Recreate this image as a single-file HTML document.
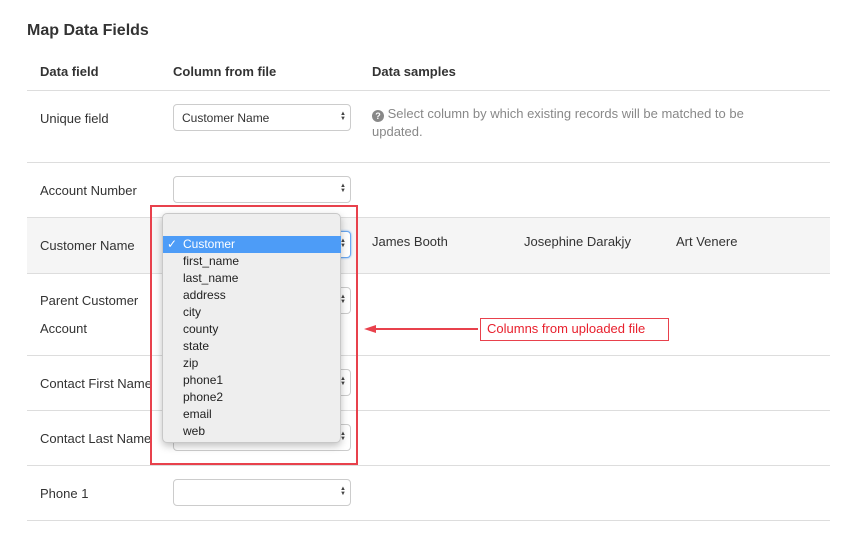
<!DOCTYPE html>
<html><head><meta charset="utf-8"><style>
body{margin:0;width:858px;height:533px;background:#fff;font-family:"Liberation Sans",sans-serif;color:#333;position:relative;overflow:hidden}
.a{position:absolute;white-space:nowrap}
.t{font-size:13px}
.h{font-weight:bold;font-size:13px;color:#333}
.line{position:absolute;left:27px;width:803px;height:1px;background:#ddd}
.sel{position:absolute;left:173px;width:178px;height:27px;border:1px solid #ccc;border-radius:4px;background:#fff;box-sizing:border-box}
.arr{position:absolute;right:4px;top:7px;font-size:6px;line-height:5px;color:#444}
</style></head><body>
<div class="a" style="left:27px;top:22px;font-size:16px;font-weight:bold;color:#333">Map Data Fields</div>
<div class="a h" style="left:40px;top:64px">Data field</div>
<div class="a h" style="left:173px;top:64px">Column from file</div>
<div class="a h" style="left:372px;top:64px">Data samples</div>
<div class="line" style="top:90px"></div>
<div class="line" style="top:162px"></div>
<div style="position:absolute;left:27px;top:217px;width:803px;height:55px;background:#f5f5f5;border-top:1px solid #ddd;border-bottom:1px solid #ddd"></div>
<div class="line" style="top:355px"></div>
<div class="line" style="top:410px"></div>
<div class="line" style="top:465px"></div>
<div class="line" style="top:520px"></div>

<div class="a t" style="left:40px;top:111px">Unique field</div>
<div class="a t" style="left:40px;top:183px">Account Number</div>
<div class="a t" style="left:40px;top:238px">Customer Name</div>
<div class="a t" style="left:40px;top:293px">Parent Customer</div>
<div class="a t" style="left:40px;top:321px">Account</div>
<div class="a t" style="left:40px;top:376px">Contact First Name</div>
<div class="a t" style="left:40px;top:431px">Contact Last Name</div>
<div class="a t" style="left:40px;top:486px">Phone 1</div>

<div class="sel" style="top:104px"><span class="a t" style="left:8px;top:6px;font-size:12px">Customer Name</span><span class="arr">▲<br>▼</span></div>
<div class="sel" style="top:176px"><span class="arr">▲<br>▼</span></div>
<div class="sel" style="top:231px;border-color:#6aa7f0;box-shadow:0 0 2px #6aa7f0"><span class="arr">▲<br>▼</span></div>
<div class="sel" style="top:287px"><span class="arr">▲<br>▼</span></div>
<div class="sel" style="top:369px"><span class="arr">▲<br>▼</span></div>
<div class="sel" style="top:424px"><span class="arr">▲<br>▼</span></div>
<div class="sel" style="top:479px"><span class="arr">▲<br>▼</span></div>

<div class="a t" style="left:372px;top:106px;color:#888"><span style="display:inline-block;width:12px;height:12px;border-radius:50%;background:#888;color:#fff;font-size:9px;text-align:center;line-height:12px;font-weight:bold;vertical-align:-1px">?</span> Select column by which existing records will be matched to be</div>
<div class="a t" style="left:372px;top:124px;color:#888">updated.</div>
<div class="a t" style="left:372px;top:234px">James Booth</div>
<div class="a t" style="left:524px;top:234px">Josephine Darakjy</div>
<div class="a t" style="left:676px;top:234px">Art Venere</div>

<div style="position:absolute;left:162px;top:213px;width:179px;height:230px;background:#eeeeee;border:1px solid #c8c8c8;border-radius:5px;box-shadow:0 3px 8px rgba(0,0,0,.25);box-sizing:border-box"></div>
<div style="position:absolute;left:163px;top:236px;width:178px;height:17px;background:#4d9cf7"></div>
<div class="a" style="left:167px;top:237px;font-size:12px;color:#fff">✓</div>
<div class="a" style="left:183px;top:237px;font-size:12px;line-height:17px;margin-top:-1px;color:#fff">Customer</div>
<div class="a" style="left:183px;top:253px;font-size:12px;line-height:17px;color:#222">first_name<br>last_name<br>address<br>city<br>county<br>state<br>zip<br>phone1<br>phone2<br>email<br>web</div>

<div style="position:absolute;left:150px;top:205px;width:208px;height:260px;border:2px solid #e8414c;box-sizing:border-box"></div>
<div style="position:absolute;left:372px;top:328px;width:106px;height:2px;background:#e8414c"></div>
<div style="position:absolute;left:364px;top:325px;width:0;height:0;border-top:4px solid transparent;border-bottom:4px solid transparent;border-right:12px solid #e8414c"></div>
<div style="position:absolute;left:480px;top:318px;width:189px;height:23px;border:1px solid #e8414c;box-sizing:border-box;background:#fff"></div>
<div class="a" style="left:487px;top:321px;font-size:13px;color:#e8212e">Columns from uploaded file</div>
</body></html>
